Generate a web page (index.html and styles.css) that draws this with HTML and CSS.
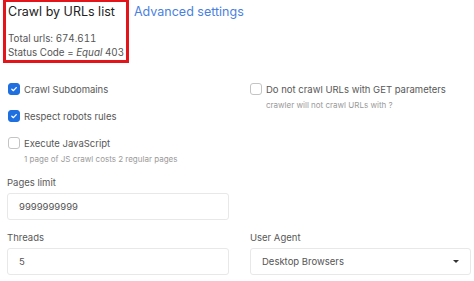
FILE: index.html
```html
<!DOCTYPE html>
<html>
<head>
<meta charset="utf-8">
<link rel="stylesheet" href="styles.css">
</head>
<body>
<div class="page">
  <div class="header">
    <div class="summary">
      <div class="title">Crawl by URLs list</div>
      <div class="meta">Total urls: 674.611</div>
      <div class="meta">Status Code = <em>Equal</em> 403</div>
    </div>
    <a class="adv">Advanced settings</a>
  </div>
  <div class="grid">
    <div class="col">
      <div class="check"><span class="box on"><svg viewBox="0 0 12 12"><path d="M3.4 6.2 L5.3 8 L8.7 4.3" fill="none" stroke="#fff" stroke-width="1.6" stroke-linecap="round" stroke-linejoin="round"/></svg></span><span class="lbl">Crawl Subdomains</span></div>
      <div class="check"><span class="box on"><svg viewBox="0 0 12 12"><path d="M3.4 6.2 L5.3 8 L8.7 4.3" fill="none" stroke="#fff" stroke-width="1.6" stroke-linecap="round" stroke-linejoin="round"/></svg></span><span class="lbl">Respect robots rules</span></div>
      <div class="check"><span class="box"></span><span class="lbl">Execute JavaScript</span></div>
      <div class="hint">1 page of JS crawl costs 2 regular pages</div>
    </div>
    <div class="col">
      <div class="check"><span class="box"></span><span class="lbl">Do not crawl URLs with GET parameters</span></div>
      <div class="hint">crawler will not crawl URLs with ?</div>
    </div>
  </div>
  <div class="fields">
    <div class="field">
      <div class="flabel">Pages limit</div>
      <div class="input">9999999999</div>
    </div>
    <div class="field"></div>
    <div class="field">
      <div class="flabel">Threads</div>
      <div class="input">5</div>
    </div>
    <div class="field">
      <div class="flabel">User Agent</div>
      <div class="input select"><span>Desktop Browsers</span><span class="caret"></span></div>
    </div>
  </div>
</div>
</body>
</html>
```
FILE: styles.css
```css
html, body { margin: 0; padding: 0; background: #fff; }
body { font-family: Inter, "Noto Sans", sans-serif; color: #555; }
.page { padding: 0 3px 0 7px; }
.header { display: flex; align-items: flex-start; margin-left: -4px; }
.summary { border: 3px solid #e3151a; border-top-width: 2px; padding: 1px 4px 0 2px; width: 114px; }
.title { font-size: 12.5px; color: #222; line-height: 18px; margin-bottom: 11px; white-space: nowrap; }
.meta { font-size: 9.8px; color: #555; line-height: 14px; white-space: nowrap; font-variant-numeric: tabular-nums; }
.meta em { font-style: italic; }
.adv { font-size: 12.5px; color: #4a7fe0; line-height: 18px; padding: 3px 0 0 5px; white-space: nowrap; }
.grid { display: grid; grid-template-columns: 242px 1fr; margin-top: 19px; }
.check { display: flex; align-items: center; height: 14px; margin-bottom: 13px; }
.box { width: 12px; height: 12px; border: 1px solid #c4c4c4; border-radius: 3px; box-sizing: border-box; margin: 0 4px 0 1px; flex: none; display: flex; align-items: center; justify-content: center; }
.box.on { background: #1e6fe0; border-color: #1e6fe0; }
.box svg { width: 12px; height: 12px; }
.lbl { font-size: 9.5px; color: #585858; white-space: nowrap; }
.hint { font-size: 8px; color: #9a9a9a; margin: -10px 0 0 17px; line-height: 12px; white-space: nowrap; }
.fields { display: grid; grid-template-columns: 222px 221px; column-gap: 21px; margin-top: 11px; }
.flabel { font-size: 9.5px; color: #585858; line-height: 14px; margin-bottom: 3px; }
.input { height: 27px; box-sizing: border-box; border: 1px solid #e8e8e8; border-radius: 3px; font-size: 9.5px; color: #555; padding: 0 11px; display: flex; align-items: center; justify-content: space-between; }
.field { margin-bottom: 11px; }
.field:empty { margin: 0; }
.caret { width: 0; height: 0; border-left: 3px solid transparent; border-right: 3px solid transparent; border-top: 3px solid #333; }
```
